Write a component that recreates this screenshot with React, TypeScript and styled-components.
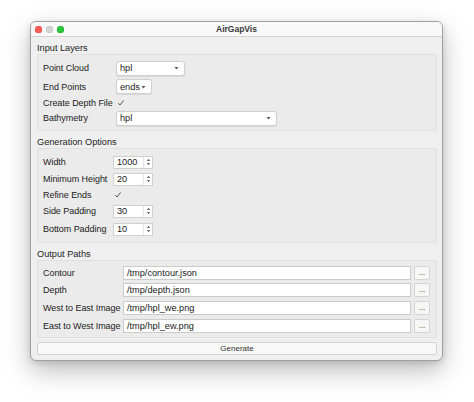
import React from 'react';
import styled, { createGlobalStyle } from 'styled-components';

const Global = createGlobalStyle`
  html, body { margin: 0; padding: 0; background: #ffffff; }
  body { font-family: "Liberation Sans", Arial, Helvetica, sans-serif; color: #222; }
  * { box-sizing: border-box; }
`;

const Page = styled.div`
  width: 474px;
  height: 402px;
  padding: 21px 0 0 30px;
`;

const Window = styled.div`
  width: 413px;
  height: 340px;
  border: 1px solid #a0a0a0;
  border-radius: 6px;
  background: #efefef;
  box-shadow: 0 10px 26px rgba(0, 0, 0, 0.26), 0 2px 6px rgba(0, 0, 0, 0.12);
  overflow: hidden;
  display: flex;
  flex-direction: column;
`;

const TitleBar = styled.div`
  flex: none;
  height: 15px;
  background: #f9f9f9;
  border-bottom: 1px solid #d2d2d2;
  display: grid;
  grid-template-columns: 1fr auto 1fr;
  align-items: center;
`;

const Lights = styled.div`
  display: flex;
  gap: 4px;
  padding-left: 4px;
`;

const Light = styled.span<{ $c: string; $b: string }>`
  width: 7px;
  height: 7px;
  border-radius: 50%;
  background: ${(p) => p.$c};
  box-shadow: inset 0 0 0 0.5px ${(p) => p.$b};
`;

const Title = styled.div`
  font-size: 8.5px;
  font-weight: bold;
  color: #3a3a3a;
`;

const Content = styled.div`
  flex: 1;
  display: flex;
  flex-direction: column;
  padding: 0 5px 0 6px;
`;

const SectionTitle = styled.div`
  padding-top: 5px;
  height: 17px;
  line-height: 12px;
  font-size: 9.2px;
  color: #222;
`;

const Group = styled.div<{ $pt: number; $pb: number }>`
  background: #ebebeb;
  border: 1px solid #e0e0e0;
  border-radius: 2px;
  padding: ${(p) => p.$pt}px 6px ${(p) => p.$pb}px 5px;
  display: flex;
  flex-direction: column;
`;

const Row = styled.div<{ $h: number }>`
  height: ${(p) => p.$h}px;
  display: flex;
  align-items: center;
`;

const Label = styled.div<{ $w: number }>`
  width: ${(p) => p.$w}px;
  flex: none;
  font-size: 9px;
  letter-spacing: -0.05px;
  color: #222;
  white-space: nowrap;
`;

const Combo = styled.div<{ $w: number }>`
  width: ${(p) => p.$w}px;
  height: 15px;
  background: #fff;
  border: 1px solid #d0d0d0;
  border-radius: 3px;
  box-shadow: 0 0.5px 1px rgba(0, 0, 0, 0.08);
  display: flex;
  align-items: center;
  justify-content: space-between;
  padding: 0 5px 0 3px;
  font-size: 9.2px;
  color: #1a1a1a;
`;

const SpinBox = styled.div`
  width: 40px;
  height: 13px;
  background: #fff;
  border: 1px solid #d0d0d0;
  display: flex;
  align-items: stretch;
  font-size: 9.2px;
  color: #1a1a1a;
`;

const SpinValue = styled.div`
  flex: 1;
  display: flex;
  align-items: center;
  padding-left: 3px;
`;

const SpinArrows = styled.div`
  width: 9px;
  border-left: 1px solid #e6e6e6;
  display: flex;
  align-items: center;
  justify-content: center;
`;

const Check = styled.div`
  width: 8px;
  height: 8px;
  margin-left: 1px;
  display: flex;
  align-items: center;
  justify-content: center;
`;

const LineEdit = styled.div`
  flex: 1;
  height: 14px;
  background: #fff;
  border: 1px solid #cbcbcb;
  display: flex;
  align-items: center;
  padding-left: 3px;
  font-size: 9.2px;
  color: #1a1a1a;
  white-space: nowrap;
  overflow: hidden;
`;

const DotsButton = styled.div`
  width: 16px;
  height: 14px;
  margin-left: 3px;
  background: #f6f6f6;
  border: 1px solid #d4d4d4;
  border-radius: 2px;
  display: flex;
  align-items: center;
  justify-content: center;
  font-size: 8px;
  color: #333;
  line-height: 1;
`;

const GenerateButton = styled.div`
  margin-top: 4px;
  height: 13px;
  background: #f8f8f8;
  border: 1px solid #d2d2d2;
  border-radius: 2px;
  display: flex;
  align-items: center;
  justify-content: center;
  font-size: 8px;
  color: #333;
`;

const Caret = () => (
  <svg width="5" height="4" viewBox="0 0 5 4">
    <path d="M0.5 1 L4.5 1 L2.5 3.4 Z" fill="#555" />
  </svg>
);

const UpDown = () => (
  <svg width="5" height="8" viewBox="0 0 5 8">
    <path d="M0.8 3 L4.2 3 L2.5 0.8 Z" fill="#666" />
    <path d="M0.8 5 L4.2 5 L2.5 7.2 Z" fill="#666" />
  </svg>
);

const CheckMark = () => (
  <svg width="8" height="8" viewBox="0 0 8 8">
    <path d="M1.4 4.2 L3 6 L6.6 1.4" fill="none" stroke="#555" strokeWidth="1" />
  </svg>
);

const Spin: React.FC<{ value: string }> = ({ value }) => (
  <SpinBox>
    <SpinValue>{value}</SpinValue>
    <SpinArrows>
      <UpDown />
    </SpinArrows>
  </SpinBox>
);

const PathRow: React.FC<{ label: string; value: string; h: number }> = ({ label, value, h }) => (
  <Row $h={h}>
    <Label $w={80}>{label}</Label>
    <LineEdit>{value}</LineEdit>
    <DotsButton>...</DotsButton>
  </Row>
);

export default function App() {
  return (
    <>
      <Global />
      <Page>
        <Window>
          <TitleBar>
            <Lights>
              <Light $c="#fe5f57" $b="#e0443e" />
              <Light $c="#d4d4d4" $b="#c2c2c2" />
              <Light $c="#2ac53f" $b="#1aab29" />
            </Lights>
            <Title>AirGapVis</Title>
            <div />
          </TitleBar>
          <Content>
            <SectionTitle>Input Layers</SectionTitle>
            <Group $pt={4} $pb={3}>
              <Row $h={18}>
                <Label $w={73}>Point Cloud</Label>
                <Combo $w={69}>
                  hpl
                  <Caret />
                </Combo>
              </Row>
              <Row $h={19}>
                <Label $w={73}>End Points</Label>
                <Combo $w={36}>
                  ends
                  <Caret />
                </Combo>
              </Row>
              <Row $h={13}>
                <Label $w={73}>Create Depth File</Label>
                <Check>
                  <CheckMark />
                </Check>
              </Row>
              <Row $h={18}>
                <Label $w={73}>Bathymetry</Label>
                <Combo $w={161}>
                  hpl
                  <Caret />
                </Combo>
              </Row>
            </Group>

            <SectionTitle>Generation Options</SectionTitle>
            <Group $pt={5} $pb={4}>
              <Row $h={16}>
                <Label $w={70}>Width</Label>
                <Spin value="1000" />
              </Row>
              <Row $h={18}>
                <Label $w={70}>Minimum Height</Label>
                <Spin value="20" />
              </Row>
              <Row $h={14}>
                <Label $w={70}>Refine Ends</Label>
                <Check>
                  <CheckMark />
                </Check>
              </Row>
              <Row $h={18}>
                <Label $w={70}>Side Padding</Label>
                <Spin value="30" />
              </Row>
              <Row $h={18}>
                <Label $w={70}>Bottom Padding</Label>
                <Spin value="10" />
              </Row>
            </Group>

            <SectionTitle>Output Paths</SectionTitle>
            <Group $pt={4} $pb={2}>
              <PathRow h={16} label="Contour" value="/tmp/contour.json" />
              <PathRow h={18} label="Depth" value="/tmp/depth.json" />
              <PathRow h={18} label="West to East Image" value="/tmp/hpl_we.png" />
              <PathRow h={18} label="East to West Image" value="/tmp/hpl_ew.png" />
            </Group>

            <GenerateButton>Generate</GenerateButton>
          </Content>
        </Window>
      </Page>
    </>
  );
}
